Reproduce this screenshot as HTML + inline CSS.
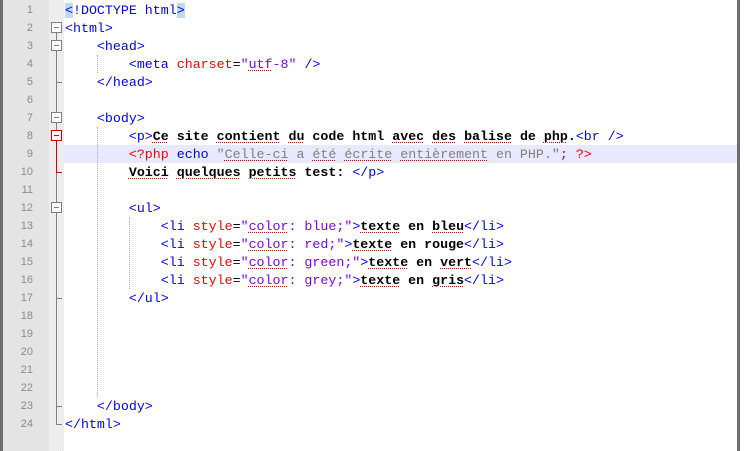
<!DOCTYPE html>
<html><head><meta charset="utf-8">
<style>
html,body{margin:0;padding:0;width:744px;height:451px;overflow:hidden;background:#fff;}
body{position:relative;font-family:"Courier New","Liberation Mono",monospace;}
#lb{position:absolute;left:0;top:0;width:3px;height:451px;background:#6d6d6d;}
#rb{position:absolute;left:737px;top:0;width:3px;height:451px;background:#6d6d6d;}
#rw{position:absolute;left:740px;top:0;width:4px;height:451px;background:#fff;}
#nm{position:absolute;left:3px;top:0;width:46px;height:451px;background:#e4e4e4;}
#fm{position:absolute;left:49px;top:0;width:15px;height:451px;
 background-color:#f4f4f4;
 background-image:linear-gradient(45deg,#e6e6e6 25%,transparent 25%,transparent 75%,#e6e6e6 75%),linear-gradient(45deg,#e6e6e6 25%,transparent 25%,transparent 75%,#e6e6e6 75%);
 background-size:2px 2px;background-position:0 0,1px 1px;}
.n{position:absolute;left:3px;width:30px;text-align:right;font-family:"Liberation Sans",Arial,sans-serif;font-size:11px;color:#8a8a8a;height:18px;line-height:18px;}
.l{position:absolute;left:65px;height:18px;line-height:19px;font-size:13.3px;white-space:pre;color:#000;}
.t{color:#0000ff}
.a{color:#ff0000}
.v{color:#8000ff}
.s{color:#808080}
.p{color:#ff0000}
.b{font-weight:bold;color:#000}
.k{color:#0000ff;}
.w{text-decoration:underline dotted #d00000;text-decoration-thickness:1px;text-underline-offset:2px;}
.sel{background:#c0d8f0;}
#hl{position:absolute;left:64px;top:145px;width:673px;height:18px;background:#e8e8ff;}
.box{position:absolute;left:51px;width:9px;height:9px;border:1px solid #808080;background:#fff;}
.box::after{content:"";position:absolute;left:2px;top:4px;width:5px;height:1px;background:#808080;}
.box.r{border-color:#d00000;}
.box.r::after{background:#d00000;}
.vl{position:absolute;left:56px;width:1px;background:#808080;}
.hl{position:absolute;left:56px;width:6px;height:1px;background:#808080;}
.red{background:#d00000!important;}
.g{position:absolute;width:0;border-left:1px dotted #b0b0b0;}
</style></head><body>
<div id="nm"></div><div id="fm"></div><div id="lb"></div><div id="rb"></div><div id="rw"></div>
<div id="hl"></div>

<div class="n" style="top:1px">1</div>
<div class="n" style="top:19px">2</div>
<div class="n" style="top:37px">3</div>
<div class="n" style="top:55px">4</div>
<div class="n" style="top:73px">5</div>
<div class="n" style="top:91px">6</div>
<div class="n" style="top:109px">7</div>
<div class="n" style="top:127px">8</div>
<div class="n" style="top:145px">9</div>
<div class="n" style="top:163px">10</div>
<div class="n" style="top:181px">11</div>
<div class="n" style="top:199px">12</div>
<div class="n" style="top:217px">13</div>
<div class="n" style="top:235px">14</div>
<div class="n" style="top:253px">15</div>
<div class="n" style="top:271px">16</div>
<div class="n" style="top:289px">17</div>
<div class="n" style="top:307px">18</div>
<div class="n" style="top:325px">19</div>
<div class="n" style="top:343px">20</div>
<div class="n" style="top:361px">21</div>
<div class="n" style="top:379px">22</div>
<div class="n" style="top:397px">23</div>
<div class="n" style="top:415px">24</div>

<div class="vl" style="top:33px;height:392px"></div>
<div class="hl" style="top:424px"></div>
<div class="hl" style="top:82px"></div>
<div class="hl" style="top:406px"></div>
<div class="hl" style="top:298px"></div>
<div class="vl red" style="top:141px;height:32px"></div>
<div class="hl red" style="top:172px"></div>
<div class="box" style="top:22px"></div>
<div class="box" style="top:40px"></div>
<div class="box" style="top:112px"></div>
<div class="box r" style="top:130px"></div>
<div class="box" style="top:202px"></div>

<div class="g" style="left:97px;top:55px;height:18px"></div>
<div class="g" style="left:97px;top:127px;height:270px"></div>
<div class="g" style="left:129px;top:217px;height:72px"></div>

<div class="l" style="top:1px"><span class="t"><span class="sel">&lt;</span>!DOCTYPE html<span class="sel">&gt;</span></span></div>
<div class="l" style="top:19px"><span class="t">&lt;html&gt;</span></div>
<div class="l" style="top:37px">    <span class="t">&lt;head&gt;</span></div>
<div class="l" style="top:55px">        <span class="t">&lt;meta </span><span class="a">charset</span>=<span class="v">"<span class="w">utf</span>-8"</span><span class="t"> /&gt;</span></div>
<div class="l" style="top:73px">    <span class="t">&lt;/head&gt;</span></div>
<div class="l" style="top:109px">    <span class="t">&lt;body&gt;</span></div>
<div class="l" style="top:127px">        <span class="t">&lt;p&gt;</span><span class="b"><span class="w">Ce</span> site <span class="w">contient</span> <span class="w">du</span> code html <span class="w">avec</span> <span class="w">des</span> <span class="w">balise</span> de <span class="w">php</span>.</span><span class="t">&lt;br /&gt;</span></div>
<div class="l" style="top:145px">        <span class="p">&lt;?php</span> <span class="k">echo</span> <span class="s">"<span class="w">Celle-ci</span> a <span class="w">été</span> <span class="w">écrite</span> <span class="w">entièrement</span> en PHP."</span><span class="v">;</span> <span class="p">?&gt;</span></div>
<div class="l" style="top:163px">        <span class="b"><span class="w">Voici</span> <span class="w">quelques</span> <span class="w">petits</span> test: </span><span class="t">&lt;/p&gt;</span></div>
<div class="l" style="top:199px">        <span class="t">&lt;ul&gt;</span></div>
<div class="l" style="top:217px">            <span class="t">&lt;li </span><span class="a">style</span>=<span class="v">"<span class="w">color</span>: blue;"</span><span class="t">&gt;</span><span class="b"><span class="w">texte</span> en <span class="w">bleu</span></span><span class="t">&lt;/li&gt;</span></div>
<div class="l" style="top:235px">            <span class="t">&lt;li </span><span class="a">style</span>=<span class="v">"<span class="w">color</span>: red;"</span><span class="t">&gt;</span><span class="b"><span class="w">texte</span> en rouge</span><span class="t">&lt;/li&gt;</span></div>
<div class="l" style="top:253px">            <span class="t">&lt;li </span><span class="a">style</span>=<span class="v">"<span class="w">color</span>: green;"</span><span class="t">&gt;</span><span class="b"><span class="w">texte</span> en <span class="w">vert</span></span><span class="t">&lt;/li&gt;</span></div>
<div class="l" style="top:271px">            <span class="t">&lt;li </span><span class="a">style</span>=<span class="v">"<span class="w">color</span>: grey;"</span><span class="t">&gt;</span><span class="b"><span class="w">texte</span> en <span class="w">gris</span></span><span class="t">&lt;/li&gt;</span></div>
<div class="l" style="top:289px">        <span class="t">&lt;/ul&gt;</span></div>
<div class="l" style="top:397px">    <span class="t">&lt;/body&gt;</span></div>
<div class="l" style="top:415px"><span class="t">&lt;/html&gt;</span></div>
</body></html>
